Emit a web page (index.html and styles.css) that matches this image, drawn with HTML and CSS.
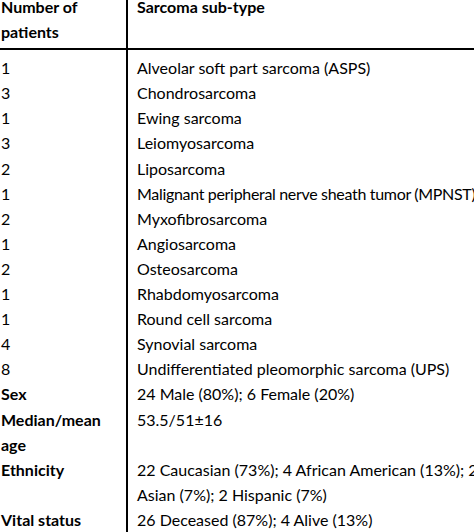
FILE: index.html
```html
<!DOCTYPE html>
<html>
<head>
<meta charset="utf-8">
<link rel="stylesheet" href="styles.css">
</head>
<body>
<div class="tbl">
  <div class="row head">
    <div class="c1">Number of<br>patients</div>
    <div class="c2">Sarcoma sub-type</div>
  </div>
  <div class="body">
    <div class="row"><div class="c1">1</div><div class="c2">Alveolar soft part sarcoma (ASPS)</div></div>
    <div class="row"><div class="c1">3</div><div class="c2">Chondrosarcoma</div></div>
    <div class="row"><div class="c1">1</div><div class="c2">Ewing sarcoma</div></div>
    <div class="row"><div class="c1">3</div><div class="c2">Leiomyosarcoma</div></div>
    <div class="row"><div class="c1">2</div><div class="c2">Liposarcoma</div></div>
    <div class="row"><div class="c1">1</div><div class="c2 tight">Malignant peripheral nerve sheath tumor (MPNST);</div></div>
    <div class="row"><div class="c1">2</div><div class="c2">Myxofibrosarcoma</div></div>
    <div class="row"><div class="c1">1</div><div class="c2">Angiosarcoma</div></div>
    <div class="row"><div class="c1">2</div><div class="c2">Osteosarcoma</div></div>
    <div class="row"><div class="c1">1</div><div class="c2">Rhabdomyosarcoma</div></div>
    <div class="row"><div class="c1">1</div><div class="c2">Round cell sarcoma</div></div>
    <div class="row"><div class="c1">4</div><div class="c2">Synovial sarcoma</div></div>
    <div class="row"><div class="c1">8</div><div class="c2">Undifferentiated pleomorphic sarcoma (UPS)</div></div>
    <div class="row"><div class="c1 b">Sex</div><div class="c2">24 Male (80%); 6 Female (20%)</div></div>
    <div class="row"><div class="c1 b">Median/mean<br>age</div><div class="c2">53.5/51±16</div></div>
    <div class="row"><div class="c1 b">Ethnicity</div><div class="c2">22 Caucasian (73%); 4 African American (13%); 2<br>Asian (7%); 2 Hispanic (7%)</div></div>
    <div class="row"><div class="c1 b">Vital status</div><div class="c2">26 Deceased (87%); 4 Alive (13%)</div></div>
  </div>
</div>
</body>
</html>
```
FILE: styles.css
```css
html, body {
  margin: 0;
  padding: 0;
  background: #fff;
  overflow: hidden;
}
body {
  width: 474px;
  height: 532px;
}
.tbl {
  margin-top: -6px;
  width: 700px;
  font-family: Lato, "Liberation Sans", sans-serif;
  font-size: 16px;
  line-height: 25.1px;
  color: #000;
  white-space: nowrap;
}
.row {
  display: flex;
}
.c1 {
  width: 126px;
  flex: none;
  padding-left: 1px;
  box-sizing: border-box;
}
.c2 {
  flex: 1;
  border-left: 2px solid #000;
  padding-left: 9px;
}
.tight {
  letter-spacing: -0.32px;
}
.head {
  font-weight: bold;
  border-bottom: 2px solid #000;
}
.head .c1, .head .c2 {
  padding-bottom: 4px;
}
.body .row:first-child .c1,
.body .row:first-child .c2 {
  padding-top: 5px;
}
.b {
  font-weight: bold;
}
```
